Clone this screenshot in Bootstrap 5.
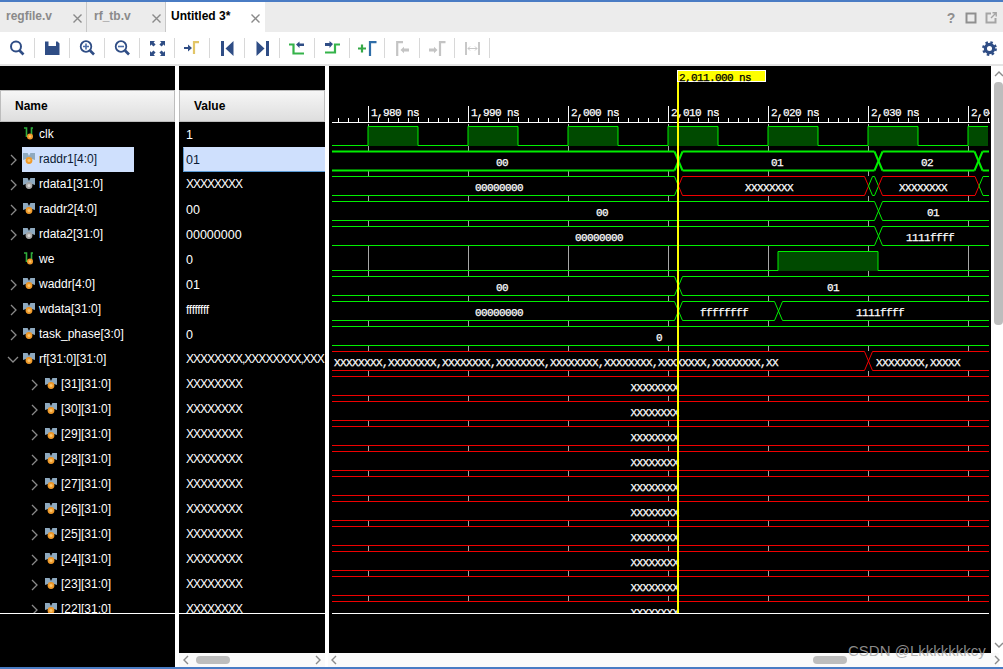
<!DOCTYPE html>
<html lang="en">
<head>
<meta charset="utf-8">
<title>Waveform</title>
<link href="https://cdn.jsdelivr.net/npm/bootstrap@5.3.0/dist/css/bootstrap.min.css" rel="stylesheet">
<style>
html,body{height:669px;overflow:hidden;background:#fff;font-family:"Liberation Sans",Arial,sans-serif;font-size:12px;}
.app-frame{height:669px;width:1003px;border-top:2px solid #4a7cc4;border-bottom:2px solid #4a7cc4;position:relative;overflow:hidden;}
.tab-strip{height:30px;background:#ececec;}
.tab-item{height:30px;font-weight:700;color:#8a8a8a;line-height:29px;position:relative;border-right:1px solid #c8c8c8;}
.tab-a{width:87px;padding-left:6px;}
.tab-b{width:79px;padding-left:7px;}
.tab-c{width:99px;padding-left:5px;background:#fff;color:#000;border-right:0;}
.tab-x{position:absolute;top:12px;width:9px;height:9px;}
.win-ctl{gap:8px;padding-right:6px;}
.tool-strip{background:#fff;border-bottom:2px solid #e4e4e4;height:34px;}
.tool-slot{width:35px;height:20px;border-right:1px solid #d8d8d8;display:flex;align-items:center;justify-content:center;}
.pane-row{height:601px;background:#fff;}
.pane-name{width:175px;background:#000;}
.pane-val{width:146px;margin-left:4px;background:#000;}
.pane-wave{width:662px;margin-left:4px;background:#000;height:587px;}
.pane-vscroll{width:12px;background:#fff;position:relative;}
.pane-top{height:24px;}
.col-head{height:32px;background:linear-gradient(#f6f6f6,#dedede);border:1px solid #bdbdbd;font-weight:700;color:#000;line-height:30px;}
.pane-name .col-head{padding-left:14px;}
.pane-val .col-head{padding-left:14px;}
.sig-list{height:491px;overflow:hidden;}
.sig-foot{border-top:1px solid #fff;height:54px;}
.sig-row{height:25px;display:flex;align-items:center;color:#fff;white-space:nowrap;}
.sig-arrow{width:7px;height:12px;margin-left:10px;margin-right:5px;flex:none;}
.sig-blank{width:22px;flex:none;}
.sig-nest .sig-arrow{margin-left:31px;margin-right:6px;}
.sig-lbl{display:flex;align-items:center;height:25px;padding-left:1px;padding-bottom:2px;gap:4px;}
.sig-sel{background:#cfe0fd;color:#0b1a33;width:112px;}
.val-row{height:25px;line-height:26px;padding-left:7px;color:#fff;white-space:nowrap;overflow:hidden;font-size:12.5px;}
.val-sel{background:#cfe0fd;color:#0b1a33;margin-left:4px;padding-left:2px;border:1px solid #5b9bd5;border-right:0;border-top-color:#cfe0fd;line-height:25px;}
.val-x{letter-spacing:-1px;font-size:12px;line-height:24px;}
.val-f{font-size:12px;letter-spacing:-.3px;}
.h-bar{height:14px;background:#fafafa;position:relative;}
.h-thumb{position:absolute;top:3px;height:8px;background:#bdbdbd;border-radius:4px;}
.h-arr{position:absolute;top:2px;width:6px;height:10px;}
.v-thumb{position:absolute;left:3px;top:16px;width:9px;height:243px;background:#bdbdbd;border-radius:4px;}
.v-arr{position:absolute;left:3px;width:10px;height:6px;}
.wave-svg{display:block;opacity:.995;}
.wave-svg text{font-family:"Liberation Mono","Courier New",monospace;font-size:11px;letter-spacing:-.6px;fill:#fff;stroke:#fff;stroke-width:.25px;}
.wave-svg text.cursor-time{fill:#000;stroke:#000;}
.csdn-mark{position:absolute;left:848px;top:640px;font-size:15px;color:rgba(165,165,165,.85);line-height:18px;white-space:nowrap;}
</style>
</head>
<body>
<svg width="0" height="0" class="position-absolute">
  <symbol id="ic-bus" viewBox="0 0 12 12"><path d="M0 0H4.6L6 3 7.4 0H12V7L9 6 6 4 3 6 0 7Z" fill="#8ea9bf"/><circle cx="6" cy="7.5" r="3.4" fill="#f09a2a"/><circle cx="6" cy="7.5" r="1.5" fill="#f9c56e"/></symbol>
  <symbol id="ic-busg" viewBox="0 0 12 12"><path d="M0 0H4.6L6 3 7.4 0H12V7L9 6 6 4 3 6 0 7Z" fill="#8ea9bf"/><circle cx="6" cy="7.5" r="3.4" fill="#a8a8a8"/><circle cx="6" cy="7.5" r="1.5" fill="#d8d8d8"/></symbol>
  <symbol id="ic-wire" viewBox="0 0 12 13"><path d="M1 1H3.5V10M8.5 10V1H10" fill="none" stroke="#2fae3c" stroke-width="1.6"/><circle cx="7" cy="9.5" r="3" fill="#f09a2a"/><circle cx="7" cy="9.5" r="1.2" fill="#f9c56e"/></symbol>
  <symbol id="ic-right" viewBox="0 0 7 12"><path d="M1 1l5 5-5 5" fill="none" stroke="#8a8a8a" stroke-width="1.3"/></symbol>
  <symbol id="ic-down" viewBox="0 0 12 7"><path d="M1 1l5 5 5-5" fill="none" stroke="#8a8a8a" stroke-width="1.3"/></symbol>
  <symbol id="ic-x" viewBox="0 0 9 9"><path d="M.5.5l8 8M8.5.5l-8 8" stroke="#8a8a8a" stroke-width="1.4"/></symbol>
</svg>
<div class="app-frame d-flex flex-column">
  <div class="tab-strip d-flex align-items-start">
    <div class="tab-item tab-a">regfile.v<svg class="tab-x" style="left:73px"><use href="#ic-x"/></svg></div>
    <div class="tab-item tab-b">rf_tb.v<svg class="tab-x" style="left:65px"><use href="#ic-x"/></svg></div>
    <div class="tab-item tab-c">Untitled 3*<svg class="tab-x" style="left:85px"><use href="#ic-x"/></svg></div>
    <div class="ms-auto d-flex align-items-center win-ctl" style="height:32px">
      <span style="font-weight:700;font-size:14px;color:#8f8f8f;width:12px;text-align:center">?</span>
      <svg width="12" height="12" viewBox="0 0 12 12"><rect x="1.5" y="1.5" width="9" height="9" fill="none" stroke="#8f8f8f" stroke-width="2"/></svg>
      <svg width="12" height="12" viewBox="0 0 12 12"><path d="M6 1.5H1.5V10.5H10.5V6" fill="none" stroke="#a5a5a5" stroke-width="2"/><path d="M6 6L11 1M7.5 .8H11.2V4.5" fill="none" stroke="#a5a5a5" stroke-width="1.4"/></svg>
    </div>
  </div>
  <div class="tool-strip d-flex align-items-center">
    <div class="tool-slot"><svg width="16" height="16" viewBox="0 0 16 16"><circle cx="7" cy="6.5" r="5" fill="none" stroke="#2f4d85" stroke-width="2"/><path d="M10.5 10.5L14.5 14.5" stroke="#2f4d85" stroke-width="2.6"/></svg></div>
    <div class="tool-slot"><svg width="15" height="15" viewBox="0 0 15 15"><path d="M0 .5H3.5V5H11V.5H12.5L14.5 2.5V14H0Z" fill="#2f4d85"/></svg></div>
    <div class="tool-slot"><svg width="16" height="16" viewBox="0 0 16 16"><circle cx="7" cy="6.5" r="5.3" fill="none" stroke="#2f4d85" stroke-width="1.8"/><path d="M11 10.5L15 14.5" stroke="#2f4d85" stroke-width="2.6"/><path d="M4 6.5H10M7 3.5V9.5" stroke="#4d6ea8" stroke-width="1.6"/></svg></div>
    <div class="tool-slot"><svg width="16" height="16" viewBox="0 0 16 16"><circle cx="7" cy="6.5" r="5.3" fill="none" stroke="#2f4d85" stroke-width="1.8"/><path d="M11 10.5L15 14.5" stroke="#2f4d85" stroke-width="2.6"/><path d="M4 6.5H10" stroke="#4d6ea8" stroke-width="1.6"/></svg></div>
    <div class="tool-slot"><svg width="15" height="15" viewBox="0 0 15 15" fill="#2f4d85"><path d="M0 0H5L3.6 1.4 5.6 3.4 3.4 5.6 1.4 3.6 0 5ZM15 0V5L13.6 3.6 11.6 5.6 9.4 3.4 11.4 1.4 10 0ZM0 15V10L1.4 11.4 3.4 9.4 5.6 11.6 3.6 13.6 5 15ZM15 15H10L11.4 13.6 9.4 11.6 11.6 9.4 13.6 11.4 15 10Z"/></svg></div>
    <div class="tool-slot"><svg width="16" height="14" viewBox="0 0 16 14"><path d="M0 6H4V3.5L8 7 4 10.5V8H0Z" fill="#2f4d85"/><path d="M15 1.2H10V13" fill="none" stroke="#e2c567" stroke-width="2.2"/></svg></div>
    <div class="tool-slot"><svg width="13" height="15" viewBox="0 0 13 15" fill="#2f4d85"><rect x="0" y="0" width="3" height="15"/><path d="M12.5 0V15L4.5 7.5Z"/></svg></div>
    <div class="tool-slot"><svg width="13" height="15" viewBox="0 0 13 15" fill="#2f4d85"><rect x="10" y="0" width="3" height="15"/><path d="M.5 0V15L8.5 7.5Z"/></svg></div>
    <div class="tool-slot"><svg width="16" height="14" viewBox="0 0 16 14"><path d="M0 3.5H4.5V12.5H15" fill="none" stroke="#35b34a" stroke-width="2.2"/><path d="M7 3.5L10.5 .5V2.5H15V5H10.5V7Z" fill="#2f4d85"/></svg></div>
    <div class="tool-slot"><svg width="16" height="14" viewBox="0 0 16 14"><path d="M1 11.5H11V3.5H16" fill="none" stroke="#35b34a" stroke-width="2.2"/><path d="M9 3L5.5 0V2H1V5H5.5V7Z" fill="#2f4d85"/></svg></div>
    <div class="tool-slot"><svg width="19" height="15" viewBox="0 0 19 15"><path d="M0 7.5H8M4 3.5V11.5" stroke="#35a847" stroke-width="2.2"/><path d="M18.5 1.2H12V15" fill="none" stroke="#2f6da8" stroke-width="2.2"/></svg></div>
    <div class="tool-slot"><svg width="13" height="15" viewBox="0 0 13 15"><path d="M7 1.2H1.2V15" fill="none" stroke="#c4c4c4" stroke-width="2.2"/><path d="M4.5 9L8 5.7V7.5H13V10.5H8V12.3Z" fill="#c4c4c4"/></svg></div>
    <div class="tool-slot"><svg width="17" height="15" viewBox="0 0 17 15"><path d="M16.5 1.2H11V15" fill="none" stroke="#c4c4c4" stroke-width="2.2"/><path d="M0 7.5H5V5.7L8.5 9 5 12.3V10.5H0Z" fill="#c4c4c4"/></svg></div>
    <div class="tool-slot"><svg width="15" height="13" viewBox="0 0 15 13"><path d="M1 0V13M14 0V13" stroke="#c8c8c8" stroke-width="2"/><path d="M3 6.5H12M5 4.5L3 6.5 5 8.5M10 4.5L12 6.5 10 8.5" stroke="#c8c8c8" fill="none"/></svg></div>
    <div class="ms-auto pe-2 d-flex"><svg width="15" height="15" viewBox="0 0 16 16"><circle cx="8" cy="8" r="4.4" fill="none" stroke="#2f4d85" stroke-width="3.4"/><circle cx="8" cy="8" r="6.6" fill="none" stroke="#2f4d85" stroke-width="2.6" stroke-dasharray="2.6 2.6"/></svg></div>
  </div>
  <div class="pane-row d-flex">
    <div class="pane-name d-flex flex-column">
      <div class="pane-top"></div>
      <div class="col-head">Name</div>
      <div class="sig-list">
        <div class="sig-row"><span class="sig-blank"></span><span class="sig-lbl"><svg width="12" height="13"><use href="#ic-wire"/></svg>clk</span></div>
        <div class="sig-row"><svg class="sig-arrow"><use href="#ic-right"/></svg><span class="sig-lbl sig-sel"><svg width="12" height="12"><use href="#ic-bus"/></svg>raddr1[4:0]</span></div>
        <div class="sig-row"><svg class="sig-arrow"><use href="#ic-right"/></svg><span class="sig-lbl"><svg width="12" height="12"><use href="#ic-busg"/></svg>rdata1[31:0]</span></div>
        <div class="sig-row"><svg class="sig-arrow"><use href="#ic-right"/></svg><span class="sig-lbl"><svg width="12" height="12"><use href="#ic-bus"/></svg>raddr2[4:0]</span></div>
        <div class="sig-row"><svg class="sig-arrow"><use href="#ic-right"/></svg><span class="sig-lbl"><svg width="12" height="12"><use href="#ic-busg"/></svg>rdata2[31:0]</span></div>
        <div class="sig-row"><span class="sig-blank"></span><span class="sig-lbl"><svg width="12" height="13"><use href="#ic-wire"/></svg>we</span></div>
        <div class="sig-row"><svg class="sig-arrow"><use href="#ic-right"/></svg><span class="sig-lbl"><svg width="12" height="12"><use href="#ic-bus"/></svg>waddr[4:0]</span></div>
        <div class="sig-row"><svg class="sig-arrow"><use href="#ic-right"/></svg><span class="sig-lbl"><svg width="12" height="12"><use href="#ic-bus"/></svg>wdata[31:0]</span></div>
        <div class="sig-row"><svg class="sig-arrow"><use href="#ic-right"/></svg><span class="sig-lbl"><svg width="12" height="12"><use href="#ic-bus"/></svg>task_phase[3:0]</span></div>
        <div class="sig-row"><svg class="sig-arrow" style="width:12px;height:7px;margin-left:7px;margin-right:3px"><use href="#ic-down"/></svg><span class="sig-lbl"><svg width="12" height="12"><use href="#ic-bus"/></svg>rf[31:0][31:0]</span></div>
        <div class="sig-row sig-nest"><svg class="sig-arrow"><use href="#ic-right"/></svg><span class="sig-lbl"><svg width="12" height="12"><use href="#ic-bus"/></svg>[31][31:0]</span></div>
        <div class="sig-row sig-nest"><svg class="sig-arrow"><use href="#ic-right"/></svg><span class="sig-lbl"><svg width="12" height="12"><use href="#ic-bus"/></svg>[30][31:0]</span></div>
        <div class="sig-row sig-nest"><svg class="sig-arrow"><use href="#ic-right"/></svg><span class="sig-lbl"><svg width="12" height="12"><use href="#ic-bus"/></svg>[29][31:0]</span></div>
        <div class="sig-row sig-nest"><svg class="sig-arrow"><use href="#ic-right"/></svg><span class="sig-lbl"><svg width="12" height="12"><use href="#ic-bus"/></svg>[28][31:0]</span></div>
        <div class="sig-row sig-nest"><svg class="sig-arrow"><use href="#ic-right"/></svg><span class="sig-lbl"><svg width="12" height="12"><use href="#ic-bus"/></svg>[27][31:0]</span></div>
        <div class="sig-row sig-nest"><svg class="sig-arrow"><use href="#ic-right"/></svg><span class="sig-lbl"><svg width="12" height="12"><use href="#ic-bus"/></svg>[26][31:0]</span></div>
        <div class="sig-row sig-nest"><svg class="sig-arrow"><use href="#ic-right"/></svg><span class="sig-lbl"><svg width="12" height="12"><use href="#ic-bus"/></svg>[25][31:0]</span></div>
        <div class="sig-row sig-nest"><svg class="sig-arrow"><use href="#ic-right"/></svg><span class="sig-lbl"><svg width="12" height="12"><use href="#ic-bus"/></svg>[24][31:0]</span></div>
        <div class="sig-row sig-nest"><svg class="sig-arrow"><use href="#ic-right"/></svg><span class="sig-lbl"><svg width="12" height="12"><use href="#ic-bus"/></svg>[23][31:0]</span></div>
        <div class="sig-row sig-nest"><svg class="sig-arrow"><use href="#ic-right"/></svg><span class="sig-lbl"><svg width="12" height="12"><use href="#ic-bus"/></svg>[22][31:0]</span></div>
      </div>
      <div class="sig-foot"></div>
    </div>
    <div class="pane-val d-flex flex-column">
      <div class="pane-top"></div>
      <div class="col-head">Value</div>
      <div class="sig-list">
        <div class="val-row">1</div>
        <div class="val-row val-sel">01</div>
        <div class="val-row val-x">XXXXXXXX</div>
        <div class="val-row">00</div>
        <div class="val-row">00000000</div>
        <div class="val-row">0</div>
        <div class="val-row">01</div>
        <div class="val-row val-f">ffffffff</div>
        <div class="val-row">0</div>
        <div class="val-row val-x">XXXXXXXX,XXXXXXXX,XXX</div>
        <div class="val-row val-x">XXXXXXXX</div>
        <div class="val-row val-x">XXXXXXXX</div>
        <div class="val-row val-x">XXXXXXXX</div>
        <div class="val-row val-x">XXXXXXXX</div>
        <div class="val-row val-x">XXXXXXXX</div>
        <div class="val-row val-x">XXXXXXXX</div>
        <div class="val-row val-x">XXXXXXXX</div>
        <div class="val-row val-x">XXXXXXXX</div>
        <div class="val-row val-x">XXXXXXXX</div>
        <div class="val-row val-x">XXXXXXXX</div>
      </div>
      <div class="sig-foot" style="height:40px"></div>
      <div class="h-bar"><svg class="h-arr" style="left:4px"><path d="M5 1L1 5l4 4" fill="none" stroke="#8a8a8a" stroke-width="1.4"/></svg><div class="h-thumb" style="left:17px;width:34px"></div><svg class="h-arr" style="left:136px"><path d="M1 1l4 4-4 4" fill="none" stroke="#8a8a8a" stroke-width="1.4"/></svg></div>
    </div>
    <div class="d-flex flex-column" style="width:674px">
      <div class="d-flex">
        <div class="pane-wave"><svg id="wave" class="wave-svg" width="662" height="587" viewBox="329 66 662 587"></svg></div>
        <div class="pane-vscroll"><svg class="v-arr" style="top:5px"><path d="M1 5l4-4 4 4" fill="none" stroke="#8a8a8a" stroke-width="1.4"/></svg><div class="v-thumb"></div><svg class="v-arr" style="top:576px"><path d="M1 1l4 4 4-4" fill="none" stroke="#8a8a8a" stroke-width="1.4"/></svg></div>
      </div>
      <div class="h-bar ms-1"><svg class="h-arr" style="left:3px"><path d="M5 1L1 5l4 4" fill="none" stroke="#8a8a8a" stroke-width="1.4"/></svg><div class="h-thumb" style="left:485px;width:34px"></div><svg class="h-arr" style="left:666px"><path d="M1 1l4 4-4 4" fill="none" stroke="#8a8a8a" stroke-width="1.4"/></svg></div>
    </div>
  </div>
  <div class="csdn-mark">CSDN @Lkkkkkkkcy</div>
</div>
<script>
(function(){
  var G='#00f000',R='#f00000',out=[],X0=332,X1=989;
  function line(d,c,w){out.push('<path d="'+d+'" fill="none" stroke="'+c+'" stroke-width="'+(w||1)+'"/>');}
  function text(x,y,s,a,extra){out.push('<text x="'+x+'" y="'+y+'"'+(a?' text-anchor="middle"':'')+(extra||'')+'>'+s+'</text>');}
  out.push('<defs><clipPath id="rc"><rect x="329" y="66" width="661" height="547"/></clipPath></defs>');
  line('M'+X0+' 122.5H990','#fff');
  for(var x=338;x<990;x+=10){var m=(x-368)%100===0,h=(x-368)%50===0;
    line('M'+(x+.5)+' '+(m?106:h?117:118)+'V122','#fff');}
  var labels=['1,980 ns','1,990 ns','2,000 ns','2,010 ns','2,020 ns','2,030 ns','2,040 ns'];
  out.push('<g clip-path="url(#rc)">');
  labels.forEach(function(s,i){text(371+100*i,116,s);});
  for(var g=368;g<990;g+=100) line('M'+(g+.5)+' 124V613','#a8a8a8');
  function bus(i,segs,w){
    var t=126+25*i,b=t+19,ty=t+.5,by=b+.5;w=w||1;
    out.push('<rect x="'+X0+'" y="'+t+'" width="'+(X1-X0)+'" height="20" fill="#000"/>');
    segs.forEach(function(s,k){
      var x1=k?s.f+4:X0, x2=s.e<X1?s.e-4:X1;
      line('M'+x1+' '+ty+'H'+x2+'M'+x1+' '+by+'H'+x2,s.c,w);
      if(k){var f=s.f,p=segs[k-1].c,m=t+10;
        line('M'+(f-4)+' '+ty+'L'+f+' '+m+'L'+(f-4)+' '+by,p,w);
        line('M'+f+' '+m+'L'+(f+4)+' '+ty+'M'+f+' '+m+'L'+(f+4)+' '+by,s.c,w);}
    });
  }
  function S(c,f,e){return{c:c,f:f,e:e};}
  function clock(){
    var d='M'+X0+' 145.5';
    for(var r=368;r<990;r+=100){
      var e=Math.min(r+50,988);
      out.push('<rect x="'+r+'" y="127" width="'+(e-r)+'" height="19" fill="#004b00"/>');
      d+='H'+r+'V126.5H'+e+(r+50<988?'V145.5':'');
    }
    line(d,G);
  }
  clock();
  bus(1,[S(G,0,678.5),S(G,678.5,878.5),S(G,878.5,978.5),S(G,978.5,999)],2);
  text(502,166,'00',1);text(777,166,'01',1);text(927,166,'02',1);
  bus(2,[S(G,0,678.5),S(R,678.5,868.5),S(G,868.5,878.5),S(R,878.5,979),S(G,979,999)]);
  text(499,191,'00000000',1);text(769,191,'XXXXXXXX',1);text(923,191,'XXXXXXXX',1);
  bus(3,[S(G,0,878.5),S(G,878.5,999)]);
  text(602,216,'00',1);text(933,216,'01',1);
  bus(4,[S(G,0,878.5),S(G,878.5,999)]);
  text(599,241,'00000000',1);text(930,241,'1111ffff',1);
  out.push('<rect x="778" y="252" width="100" height="19" fill="#004b00"/>');
  line('M'+X0+' 270.5H778V251.5H878V270.5H'+X1,G);
  bus(6,[S(G,0,678.5),S(G,678.5,999)]);
  text(502,291,'00',1);text(833,291,'01',1);
  bus(7,[S(G,0,678.5),S(G,678.5,778.5),S(G,778.5,999)]);
  text(499,316,'00000000',1);text(724,316,'ffffffff',1);text(880,316,'1111ffff',1);
  bus(8,[S(G,0,999)]);
  text(659,341,'0',1);
  bus(9,[S(R,0,868.5),S(R,868.5,999)]);
  text(334,366,'XXXXXXXX, XXXXXXXX, XXXXXXXX, XXXXXXXX, XXXXXXXX, XXXXXXXX, XXXXXXXX, XXXXXXXX, XX',0,' style="word-spacing:-6px"');
  text(876,366,'XXXXXXXX, XXXXX',0,' style="word-spacing:-6px"');
  for(var i=10;i<20;i++){bus(i,[S(R,0,999)]);text(654.5,126+25*i+15,'XXXXXXXX',1);}
  out.push('</g>');
  out.push('<rect x="677" y="81" width="2" height="532" fill="#ffff00"/>');
  out.push('<rect x="677.5" y="70.5" width="88" height="11" fill="#ffff00" stroke="#fff"/>');
  out.push('<text class="cursor-time" x="679" y="80.5">2,011.000 ns</text>');
  line('M'+X0+' 613.5H'+X1,'#fff');
  document.getElementById('wave').innerHTML=out.join('');
})();
</script>
<script src="https://cdn.jsdelivr.net/npm/bootstrap@5.3.0/dist/js/bootstrap.bundle.min.js"></script>
</body>
</html>
